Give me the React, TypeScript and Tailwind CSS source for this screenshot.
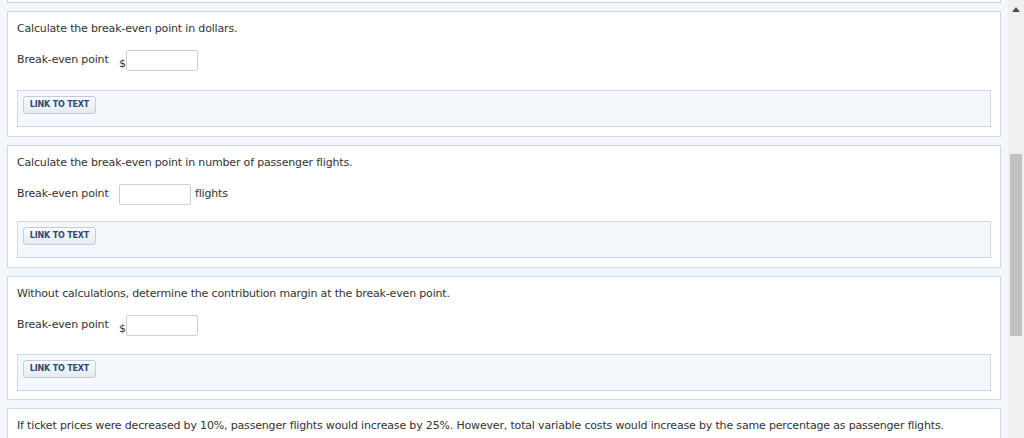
const font = { fontFamily: '"DejaVu Sans", Verdana, sans-serif' };

function LinkBox({ tight }: { tight?: boolean }) {
  return (
    <div
      className={`mx-[9px] border border-[#cfd8e3] bg-[#f4f7fb] px-[5px] pt-[5px] pb-[12px] ${tight ? "mb-[8px]" : "mb-[9px]"}`}
    >
      <button className="flex h-[18px] w-[73px] items-center justify-center rounded-[3px] border border-[#c3ccd8] bg-gradient-to-b from-[#fbfcfd] to-[#e6ebf1] text-[8px] font-bold text-[#2c4a72]">
        LINK TO TEXT
      </button>
    </div>
  );
}

function AmountRow({ dollar, unit }: { dollar?: boolean; unit?: string }) {
  return (
    <div className="flex h-[21px] items-center px-[9px]">
      <span className="w-[102px] shrink-0">Break-even point</span>
      {dollar && <span className="w-[7px] self-end pt-[1px] leading-[14px]">$</span>}
      <input className="h-[21px] w-[72px] rounded-[2px] border border-[#cfcfcf] bg-white" />
      {unit && <span className="ml-[4px]">{unit}</span>}
    </div>
  );
}

function Card({ title, dollar, unit, tight }: { title: string; dollar?: boolean; unit?: string; tight?: boolean }) {
  return (
    <div className="shrink-0 border border-[#cfd7e0] bg-white">
      <p className="px-[9px] pt-[9px] leading-[15px]">{title}</p>
      <div className="mt-[14px]">
        <AmountRow dollar={dollar} unit={unit} />
      </div>
      <div className={dollar ? (tight ? "mt-[18px]" : "mt-[19px]") : "mt-[16px]"}>
        <LinkBox tight={tight} />
      </div>
    </div>
  );
}

export default function App() {
  return (
    <div style={font} className="flex h-[438px] w-[1024px] overflow-hidden bg-[#f3f6fa] text-[11px] tracking-[-0.17px] text-[#333]">
      <div className="flex flex-1 flex-col gap-[8px] px-[7px]">
        <div className="h-[3px] shrink-0 border-x border-b border-[#cfd7e0] bg-white" />
        <div className="flex shrink-0 flex-col gap-[8px]">
          <Card title="Calculate the break-even point in dollars." dollar />
          <Card title="Calculate the break-even point in number of passenger flights." unit="flights" />
          <Card title="Without calculations, determine the contribution margin at the break-even point." dollar tight />
          <div className="h-[60px] shrink-0 border border-[#cfd7e0] bg-white">
            <p className="px-[9px] pt-[9px] leading-[15px]">
              If ticket prices were decreased by 10%, passenger flights would increase by 25%. However, total variable costs would increase by the same percentage as passenger flights.
            </p>
          </div>
        </div>
      </div>
      <div className="flex w-[16px] shrink-0 flex-col items-center bg-[#f0f0f0]">
        <svg width="8" height="5" viewBox="0 0 8 5" className="mt-[7px]">
          <path d="M0 5 L4 0 L8 5 Z" fill="#505050" />
        </svg>
        <div className="mt-[142px] h-[182px] w-[12px] bg-[#c1c1c1]" />
      </div>
    </div>
  );
}
